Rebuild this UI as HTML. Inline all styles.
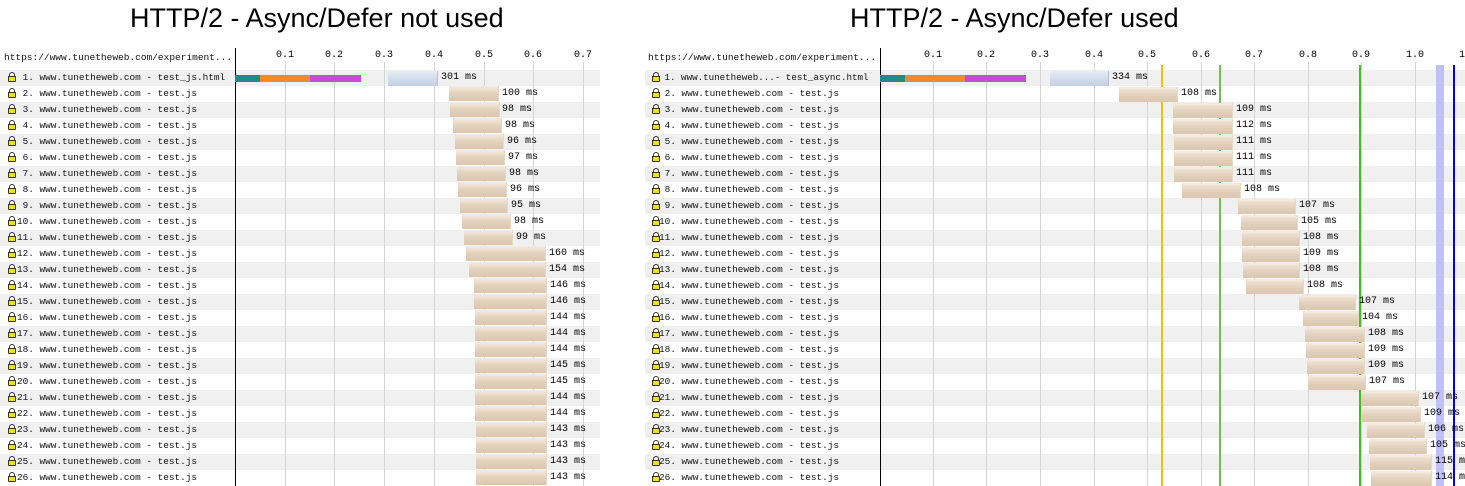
<!DOCTYPE html>
<html><head><meta charset="utf-8"><style>
*{margin:0;padding:0;box-sizing:border-box}
body{width:1465px;height:486px;background:#fff;position:relative;overflow:hidden;font-family:"Liberation Mono",monospace}
.a{position:absolute}
.t{font-family:"Liberation Sans",sans-serif;font-size:27px;color:#000;top:3px;white-space:nowrap}
.sh{background:#f0f0f0;height:16px}
.g{width:1px;background:#d4d4d4;top:62px;height:424px}
.tk{font-size:10px;top:50px;color:#000;transform:translateX(-50%)}
.l{font-size:9.4px;white-space:pre;color:#111;line-height:16px;height:16px}
.lk{width:8px;height:6px;background:#f5e000;border:1px solid #333;border-radius:0 0 1px 1px}
.lk:before{content:"";position:absolute;left:0px;top:-5px;width:4px;height:4px;border:1px solid #333;border-bottom:none;border-radius:3px 3px 0 0}
.b{height:15px;background:linear-gradient(#f4ebe1,#e3d1bc 50%,#dcc7b0);border-right:1px solid #e8d8c4}
.ms{font-size:10px;line-height:16px;white-space:pre}
</style></head><body>
<div class="a t" style="left:130px">HTTP/2 - Async/Defer not used</div>
<div class="a t" style="left:850px">HTTP/2 - Async/Defer used</div>

<!-- LEFT -->
<div class="a" style="left:0;top:0;width:600px;height:486px">
<div class="a sh" style="left:0;top:70px;width:600px"></div>
<div class="a sh" style="left:0;top:102px;width:600px"></div>
<div class="a sh" style="left:0;top:134px;width:600px"></div>
<div class="a sh" style="left:0;top:166px;width:600px"></div>
<div class="a sh" style="left:0;top:198px;width:600px"></div>
<div class="a sh" style="left:0;top:230px;width:600px"></div>
<div class="a sh" style="left:0;top:262px;width:600px"></div>
<div class="a sh" style="left:0;top:294px;width:600px"></div>
<div class="a sh" style="left:0;top:326px;width:600px"></div>
<div class="a sh" style="left:0;top:358px;width:600px"></div>
<div class="a sh" style="left:0;top:390px;width:600px"></div>
<div class="a sh" style="left:0;top:422px;width:600px"></div>
<div class="a sh" style="left:0;top:454px;width:600px"></div>
<div class="a g" style="left:285px"></div><div class="a g" style="left:334px"></div><div class="a g" style="left:384px"></div><div class="a g" style="left:434px"></div><div class="a g" style="left:484px"></div><div class="a g" style="left:533px"></div><div class="a g" style="left:583px"></div>
<div class="a tk" style="left:285px">0.1</div><div class="a tk" style="left:334px">0.2</div><div class="a tk" style="left:384px">0.3</div><div class="a tk" style="left:434px">0.4</div><div class="a tk" style="left:484px">0.5</div><div class="a tk" style="left:533px">0.6</div><div class="a tk" style="left:583px">0.7</div>
<div class="a" style="left:235px;top:48px;width:1px;height:438px;background:#000"></div>
<div class="a l" style="left:4px;top:50px;font-size:9.5px">https://www.tunetheweb.com/experiment...</div>
<div class="a" style="left:235px;top:75px;width:25px;height:7px;background:#1f8a8a"></div>
<div class="a" style="left:260px;top:75px;width:50px;height:7px;background:#f08a2c"></div>
<div class="a" style="left:310px;top:75px;width:51px;height:7px;background:#c84ad8"></div>
<div class="a b" style="left:388px;top:71px;width:50px;background:linear-gradient(#e4ecf6,#c2d0e2);border-right:1px solid #b0c0d8"></div>
<div class="a ms" style="left:441px;top:70px">301 ms</div>
</div>

<div class="a" style="left:0;top:70px"><div class="a lk" style="left:8px;top:6px"></div><span class="a l" style="left:17px"> 1. www.tunetheweb.com - test_js.html</span></div>
<div class="a" style="left:0;top:86px"><div class="a lk" style="left:8px;top:6px"></div><span class="a l" style="left:17px"> 2. www.tunetheweb.com - test.js</span><div class="a b" style="left:449px;top:0;width:50px"></div><span class="a ms" style="left:502px">100 ms</span></div>
<div class="a" style="left:0;top:102px"><div class="a lk" style="left:8px;top:6px"></div><span class="a l" style="left:17px"> 3. www.tunetheweb.com - test.js</span><div class="a b" style="left:450px;top:0;width:50px"></div><span class="a ms" style="left:502px">98 ms</span></div>
<div class="a" style="left:0;top:118px"><div class="a lk" style="left:8px;top:6px"></div><span class="a l" style="left:17px"> 4. www.tunetheweb.com - test.js</span><div class="a b" style="left:453px;top:0;width:49px"></div><span class="a ms" style="left:505px">98 ms</span></div>
<div class="a" style="left:0;top:134px"><div class="a lk" style="left:8px;top:6px"></div><span class="a l" style="left:17px"> 5. www.tunetheweb.com - test.js</span><div class="a b" style="left:455px;top:0;width:49px"></div><span class="a ms" style="left:507px">96 ms</span></div>
<div class="a" style="left:0;top:150px"><div class="a lk" style="left:8px;top:6px"></div><span class="a l" style="left:17px"> 6. www.tunetheweb.com - test.js</span><div class="a b" style="left:456px;top:0;width:49px"></div><span class="a ms" style="left:508px">97 ms</span></div>
<div class="a" style="left:0;top:166px"><div class="a lk" style="left:8px;top:6px"></div><span class="a l" style="left:17px"> 7. www.tunetheweb.com - test.js</span><div class="a b" style="left:457px;top:0;width:49px"></div><span class="a ms" style="left:509px">98 ms</span></div>
<div class="a" style="left:0;top:182px"><div class="a lk" style="left:8px;top:6px"></div><span class="a l" style="left:17px"> 8. www.tunetheweb.com - test.js</span><div class="a b" style="left:458px;top:0;width:49px"></div><span class="a ms" style="left:510px">96 ms</span></div>
<div class="a" style="left:0;top:198px"><div class="a lk" style="left:8px;top:6px"></div><span class="a l" style="left:17px"> 9. www.tunetheweb.com - test.js</span><div class="a b" style="left:460px;top:0;width:48px"></div><span class="a ms" style="left:511px">95 ms</span></div>
<div class="a" style="left:0;top:214px"><div class="a lk" style="left:8px;top:6px"></div><span class="a l" style="left:17px">10. www.tunetheweb.com - test.js</span><div class="a b" style="left:462px;top:0;width:49px"></div><span class="a ms" style="left:514px">98 ms</span></div>
<div class="a" style="left:0;top:230px"><div class="a lk" style="left:8px;top:6px"></div><span class="a l" style="left:17px">11. www.tunetheweb.com - test.js</span><div class="a b" style="left:464px;top:0;width:49px"></div><span class="a ms" style="left:516px">99 ms</span></div>
<div class="a" style="left:0;top:246px"><div class="a lk" style="left:8px;top:6px"></div><span class="a l" style="left:17px">12. www.tunetheweb.com - test.js</span><div class="a b" style="left:466px;top:0;width:80px"></div><span class="a ms" style="left:549px">160 ms</span></div>
<div class="a" style="left:0;top:262px"><div class="a lk" style="left:8px;top:6px"></div><span class="a l" style="left:17px">13. www.tunetheweb.com - test.js</span><div class="a b" style="left:469px;top:0;width:77px"></div><span class="a ms" style="left:549px">154 ms</span></div>
<div class="a" style="left:0;top:278px"><div class="a lk" style="left:8px;top:6px"></div><span class="a l" style="left:17px">14. www.tunetheweb.com - test.js</span><div class="a b" style="left:474px;top:0;width:73px"></div><span class="a ms" style="left:550px">146 ms</span></div>
<div class="a" style="left:0;top:294px"><div class="a lk" style="left:8px;top:6px"></div><span class="a l" style="left:17px">15. www.tunetheweb.com - test.js</span><div class="a b" style="left:474px;top:0;width:73px"></div><span class="a ms" style="left:550px">146 ms</span></div>
<div class="a" style="left:0;top:310px"><div class="a lk" style="left:8px;top:6px"></div><span class="a l" style="left:17px">16. www.tunetheweb.com - test.js</span><div class="a b" style="left:475px;top:0;width:72px"></div><span class="a ms" style="left:550px">144 ms</span></div>
<div class="a" style="left:0;top:326px"><div class="a lk" style="left:8px;top:6px"></div><span class="a l" style="left:17px">17. www.tunetheweb.com - test.js</span><div class="a b" style="left:475px;top:0;width:72px"></div><span class="a ms" style="left:550px">144 ms</span></div>
<div class="a" style="left:0;top:342px"><div class="a lk" style="left:8px;top:6px"></div><span class="a l" style="left:17px">18. www.tunetheweb.com - test.js</span><div class="a b" style="left:475px;top:0;width:72px"></div><span class="a ms" style="left:550px">144 ms</span></div>
<div class="a" style="left:0;top:358px"><div class="a lk" style="left:8px;top:6px"></div><span class="a l" style="left:17px">19. www.tunetheweb.com - test.js</span><div class="a b" style="left:475px;top:0;width:72px"></div><span class="a ms" style="left:550px">145 ms</span></div>
<div class="a" style="left:0;top:374px"><div class="a lk" style="left:8px;top:6px"></div><span class="a l" style="left:17px">20. www.tunetheweb.com - test.js</span><div class="a b" style="left:475px;top:0;width:72px"></div><span class="a ms" style="left:550px">145 ms</span></div>
<div class="a" style="left:0;top:390px"><div class="a lk" style="left:8px;top:6px"></div><span class="a l" style="left:17px">21. www.tunetheweb.com - test.js</span><div class="a b" style="left:475px;top:0;width:72px"></div><span class="a ms" style="left:550px">144 ms</span></div>
<div class="a" style="left:0;top:406px"><div class="a lk" style="left:8px;top:6px"></div><span class="a l" style="left:17px">22. www.tunetheweb.com - test.js</span><div class="a b" style="left:475px;top:0;width:72px"></div><span class="a ms" style="left:550px">144 ms</span></div>
<div class="a" style="left:0;top:422px"><div class="a lk" style="left:8px;top:6px"></div><span class="a l" style="left:17px">23. www.tunetheweb.com - test.js</span><div class="a b" style="left:476px;top:0;width:71px"></div><span class="a ms" style="left:550px">143 ms</span></div>
<div class="a" style="left:0;top:438px"><div class="a lk" style="left:8px;top:6px"></div><span class="a l" style="left:17px">24. www.tunetheweb.com - test.js</span><div class="a b" style="left:476px;top:0;width:71px"></div><span class="a ms" style="left:550px">143 ms</span></div>
<div class="a" style="left:0;top:454px"><div class="a lk" style="left:8px;top:6px"></div><span class="a l" style="left:17px">25. www.tunetheweb.com - test.js</span><div class="a b" style="left:476px;top:0;width:71px"></div><span class="a ms" style="left:550px">143 ms</span></div>
<div class="a" style="left:0;top:470px"><div class="a lk" style="left:8px;top:6px"></div><span class="a l" style="left:17px">26. www.tunetheweb.com - test.js</span><div class="a b" style="left:476px;top:0;width:71px"></div><span class="a ms" style="left:550px">143 ms</span></div>

<!-- RIGHT -->
<div class="a" style="left:645px;top:0;width:820px;height:486px">
<div class="a sh" style="left:0;top:70px;width:820px"></div>
<div class="a sh" style="left:0;top:102px;width:820px"></div>
<div class="a sh" style="left:0;top:134px;width:820px"></div>
<div class="a sh" style="left:0;top:166px;width:820px"></div>
<div class="a sh" style="left:0;top:198px;width:820px"></div>
<div class="a sh" style="left:0;top:230px;width:820px"></div>
<div class="a sh" style="left:0;top:262px;width:820px"></div>
<div class="a sh" style="left:0;top:294px;width:820px"></div>
<div class="a sh" style="left:0;top:326px;width:820px"></div>
<div class="a sh" style="left:0;top:358px;width:820px"></div>
<div class="a sh" style="left:0;top:390px;width:820px"></div>
<div class="a sh" style="left:0;top:422px;width:820px"></div>
<div class="a sh" style="left:0;top:454px;width:820px"></div>
</div>
<div class="a g" style="left:933px"></div><div class="a g" style="left:986px"></div><div class="a g" style="left:1040px"></div><div class="a g" style="left:1094px"></div><div class="a g" style="left:1147px"></div><div class="a g" style="left:1201px"></div><div class="a g" style="left:1254px"></div><div class="a g" style="left:1308px"></div><div class="a g" style="left:1361px"></div><div class="a g" style="left:1415px"></div>
<div class="a tk" style="left:933px">0.1</div><div class="a tk" style="left:986px">0.2</div><div class="a tk" style="left:1040px">0.3</div><div class="a tk" style="left:1094px">0.4</div><div class="a tk" style="left:1147px">0.5</div><div class="a tk" style="left:1201px">0.6</div><div class="a tk" style="left:1254px">0.7</div><div class="a tk" style="left:1308px">0.8</div><div class="a tk" style="left:1361px">0.9</div><div class="a tk" style="left:1415px">1.0</div><div class="a tk" style="left:1468px">1.1</div>
<div class="a" style="left:1436px;top:65px;width:8px;height:421px;background:#c0c0f8"></div>
<div class="a" style="left:1453px;top:65px;width:2px;height:421px;background:#0000ff"></div>
<div class="a" style="left:1161px;top:65px;width:2px;height:421px;background:#f5c000"></div>
<div class="a" style="left:1219px;top:65px;width:2px;height:421px;background:#70c050"></div>
<div class="a" style="left:1359px;top:65px;width:2px;height:421px;background:#40c020"></div>
<div class="a" style="left:880px;top:48px;width:1px;height:438px;background:#000"></div>
<div class="a l" style="left:648px;top:50px;font-size:9.5px">https://www.tunetheweb.com/experiment...</div>
<div class="a" style="left:880px;top:75px;width:25px;height:7px;background:#1f8a8a"></div>
<div class="a" style="left:905px;top:75px;width:60px;height:7px;background:#f08a2c"></div>
<div class="a" style="left:965px;top:75px;width:61px;height:7px;background:#c84ad8"></div>
<div class="a b" style="left:1050px;top:71px;width:59px;background:linear-gradient(#e4ecf6,#c2d0e2);border-right:1px solid #b0c0d8"></div>
<div class="a ms" style="left:1112px;top:70px">334 ms</div>

<div class="a" style="left:0;top:70px"><div class="a lk" style="left:652px;top:6px"></div><span class="a l" style="left:659px;font-size:9.2px"> 1. www.tunetheweb...- test_async.html</span></div>
<div class="a" style="left:0;top:86px"><div class="a lk" style="left:652px;top:6px"></div><span class="a l" style="left:659px"> 2. www.tunetheweb.com - test.js</span></div>
<div class="a" style="left:0;top:102px"><div class="a lk" style="left:652px;top:6px"></div><span class="a l" style="left:659px"> 3. www.tunetheweb.com - test.js</span></div>
<div class="a" style="left:0;top:118px"><div class="a lk" style="left:652px;top:6px"></div><span class="a l" style="left:659px"> 4. www.tunetheweb.com - test.js</span></div>
<div class="a" style="left:0;top:134px"><div class="a lk" style="left:652px;top:6px"></div><span class="a l" style="left:659px"> 5. www.tunetheweb.com - test.js</span></div>
<div class="a" style="left:0;top:150px"><div class="a lk" style="left:652px;top:6px"></div><span class="a l" style="left:659px"> 6. www.tunetheweb.com - test.js</span></div>
<div class="a" style="left:0;top:166px"><div class="a lk" style="left:652px;top:6px"></div><span class="a l" style="left:659px"> 7. www.tunetheweb.com - test.js</span></div>
<div class="a" style="left:0;top:182px"><div class="a lk" style="left:652px;top:6px"></div><span class="a l" style="left:659px"> 8. www.tunetheweb.com - test.js</span></div>
<div class="a" style="left:0;top:198px"><div class="a lk" style="left:652px;top:6px"></div><span class="a l" style="left:659px"> 9. www.tunetheweb.com - test.js</span></div>
<div class="a" style="left:0;top:214px"><div class="a lk" style="left:652px;top:6px"></div><span class="a l" style="left:659px">10. www.tunetheweb.com - test.js</span></div>
<div class="a" style="left:0;top:230px"><div class="a lk" style="left:652px;top:6px"></div><span class="a l" style="left:659px">11. www.tunetheweb.com - test.js</span></div>
<div class="a" style="left:0;top:246px"><div class="a lk" style="left:652px;top:6px"></div><span class="a l" style="left:659px">12. www.tunetheweb.com - test.js</span></div>
<div class="a" style="left:0;top:262px"><div class="a lk" style="left:652px;top:6px"></div><span class="a l" style="left:659px">13. www.tunetheweb.com - test.js</span></div>
<div class="a" style="left:0;top:278px"><div class="a lk" style="left:652px;top:6px"></div><span class="a l" style="left:659px">14. www.tunetheweb.com - test.js</span></div>
<div class="a" style="left:0;top:294px"><div class="a lk" style="left:652px;top:6px"></div><span class="a l" style="left:659px">15. www.tunetheweb.com - test.js</span></div>
<div class="a" style="left:0;top:310px"><div class="a lk" style="left:652px;top:6px"></div><span class="a l" style="left:659px">16. www.tunetheweb.com - test.js</span></div>
<div class="a" style="left:0;top:326px"><div class="a lk" style="left:652px;top:6px"></div><span class="a l" style="left:659px">17. www.tunetheweb.com - test.js</span></div>
<div class="a" style="left:0;top:342px"><div class="a lk" style="left:652px;top:6px"></div><span class="a l" style="left:659px">18. www.tunetheweb.com - test.js</span></div>
<div class="a" style="left:0;top:358px"><div class="a lk" style="left:652px;top:6px"></div><span class="a l" style="left:659px">19. www.tunetheweb.com - test.js</span></div>
<div class="a" style="left:0;top:374px"><div class="a lk" style="left:652px;top:6px"></div><span class="a l" style="left:659px">20. www.tunetheweb.com - test.js</span></div>
<div class="a" style="left:0;top:390px"><div class="a lk" style="left:652px;top:6px"></div><span class="a l" style="left:659px">21. www.tunetheweb.com - test.js</span></div>
<div class="a" style="left:0;top:406px"><div class="a lk" style="left:652px;top:6px"></div><span class="a l" style="left:659px">22. www.tunetheweb.com - test.js</span></div>
<div class="a" style="left:0;top:422px"><div class="a lk" style="left:652px;top:6px"></div><span class="a l" style="left:659px">23. www.tunetheweb.com - test.js</span></div>
<div class="a" style="left:0;top:438px"><div class="a lk" style="left:652px;top:6px"></div><span class="a l" style="left:659px">24. www.tunetheweb.com - test.js</span></div>
<div class="a" style="left:0;top:454px"><div class="a lk" style="left:652px;top:6px"></div><span class="a l" style="left:659px">25. www.tunetheweb.com - test.js</span></div>
<div class="a" style="left:0;top:470px"><div class="a lk" style="left:652px;top:6px"></div><span class="a l" style="left:659px">26. www.tunetheweb.com - test.js</span></div>

<div class="a b" style="left:1119px;top:87px;width:59px"></div><span class="a ms" style="left:1181px;top:86px">108 ms</span>
<div class="a b" style="left:1173px;top:103px;width:60px"></div><span class="a ms" style="left:1236px;top:102px">109 ms</span>
<div class="a b" style="left:1173px;top:119px;width:60px"></div><span class="a ms" style="left:1236px;top:118px">112 ms</span>
<div class="a b" style="left:1174px;top:135px;width:59px"></div><span class="a ms" style="left:1236px;top:134px">111 ms</span>
<div class="a b" style="left:1174px;top:151px;width:59px"></div><span class="a ms" style="left:1236px;top:150px">111 ms</span>
<div class="a b" style="left:1174px;top:167px;width:59px"></div><span class="a ms" style="left:1236px;top:166px">111 ms</span>
<div class="a b" style="left:1182px;top:183px;width:59px"></div><span class="a ms" style="left:1244px;top:182px">108 ms</span>
<div class="a b" style="left:1238px;top:199px;width:58px"></div><span class="a ms" style="left:1299px;top:198px">107 ms</span>
<div class="a b" style="left:1241px;top:215px;width:57px"></div><span class="a ms" style="left:1301px;top:214px">105 ms</span>
<div class="a b" style="left:1242px;top:231px;width:58px"></div><span class="a ms" style="left:1303px;top:230px">108 ms</span>
<div class="a b" style="left:1242px;top:247px;width:58px"></div><span class="a ms" style="left:1303px;top:246px">109 ms</span>
<div class="a b" style="left:1243px;top:263px;width:57px"></div><span class="a ms" style="left:1303px;top:262px">108 ms</span>
<div class="a b" style="left:1246px;top:279px;width:58px"></div><span class="a ms" style="left:1307px;top:278px">108 ms</span>
<div class="a b" style="left:1299px;top:295px;width:57px"></div><span class="a ms" style="left:1359px;top:294px">107 ms</span>
<div class="a b" style="left:1303px;top:311px;width:56px"></div><span class="a ms" style="left:1362px;top:310px">104 ms</span>
<div class="a b" style="left:1305px;top:327px;width:60px"></div><span class="a ms" style="left:1368px;top:326px">108 ms</span>
<div class="a b" style="left:1306px;top:343px;width:59px"></div><span class="a ms" style="left:1368px;top:342px">109 ms</span>
<div class="a b" style="left:1307px;top:359px;width:58px"></div><span class="a ms" style="left:1368px;top:358px">109 ms</span>
<div class="a b" style="left:1308px;top:375px;width:58px"></div><span class="a ms" style="left:1369px;top:374px">107 ms</span>
<div class="a b" style="left:1361px;top:391px;width:58px"></div><span class="a ms" style="left:1422px;top:390px">107 ms</span>
<div class="a b" style="left:1362px;top:407px;width:59px"></div><span class="a ms" style="left:1424px;top:406px">109 ms</span>
<div class="a b" style="left:1367px;top:423px;width:58px"></div><span class="a ms" style="left:1428px;top:422px">106 ms</span>
<div class="a b" style="left:1369px;top:439px;width:58px"></div><span class="a ms" style="left:1430px;top:438px">105 ms</span>
<div class="a b" style="left:1370px;top:455px;width:62px"></div><span class="a ms" style="left:1435px;top:454px">115 ms</span>
<div class="a b" style="left:1371px;top:471px;width:61px"></div><span class="a ms" style="left:1435px;top:470px">114 ms</span>
</body></html>
